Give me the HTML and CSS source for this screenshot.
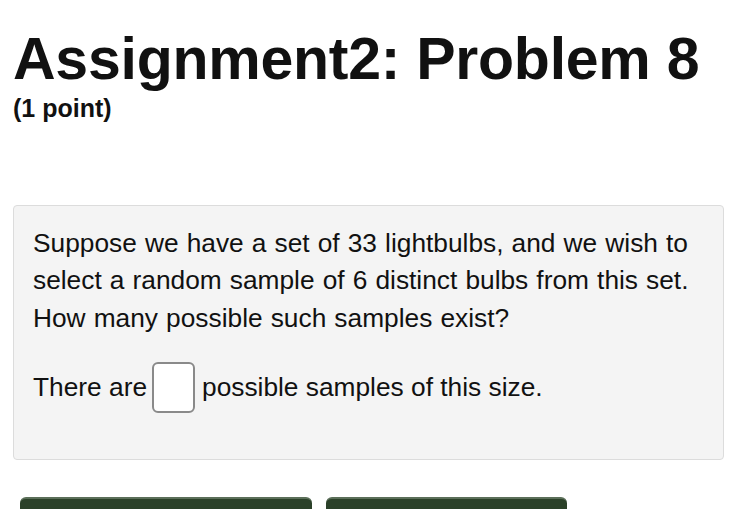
FILE: index.html
```html
<!DOCTYPE html>
<html lang="en">
<head>
<meta charset="utf-8">
<title>Assignment2: Problem 8</title>
<link rel="stylesheet" href="styles.css">
</head>
<body>
<main class="page">
  <h1 class="title">Assignment2: Problem 8</h1>
  <div class="points">(1 point)</div>
  <section class="problem">
    <p class="question">Suppose we have a set of 33 lightbulbs, and we wish to select a random sample of 6 distinct bulbs from this set. How many possible such samples exist?</p>
    <div class="answer-row">
      <span>There are</span>
      <input class="answer" type="text" aria-label="answer">
      <span>possible samples of this size.</span>
    </div>
  </section>
  <div class="actions">
    <button class="btn btn-wide" type="button"></button>
    <button class="btn btn-narrow" type="button"></button>
  </div>
</main>
</body>
</html>
```
FILE: styles.css
```css
html, body {
  margin: 0;
  padding: 0;
  background: #ffffff;
}
body {
  font-family: "Liberation Sans", Arial, Helvetica, sans-serif;
  color: #111111;
  overflow: hidden;
}
.page {
  padding: 0 14px 0 13px;
}
.title {
  margin: 26px 0 0 0;
  font-size: 59px;
  line-height: 1.15;
  font-weight: bold;
  letter-spacing: -0.25px;
}
.points {
  font-size: 25px;
  line-height: 1.15;
  font-weight: bold;
}
.problem {
  margin-top: 82px;
  background: #f4f4f4;
  border: 1px solid #dcdcdc;
  border-radius: 4px;
  padding: 19px 19px 46px 19px;
  font-size: 26.3px;
  line-height: 1.43;
}
.question {
  margin: 0 0 25px 0;
  word-spacing: 0.8px;
}
.answer-row {
  display: flex;
  align-items: center;
  gap: 5px;
}
.answer {
  box-sizing: border-box;
  width: 43px;
  height: 51px;
  margin: 0 2px 0 0;
  border: 2px solid #8a8a8a;
  border-radius: 6px;
  background: #ffffff;
  padding: 0;
  font: inherit;
}
.actions {
  display: flex;
  gap: 14px;
  margin: 37px 0 0 7px;
}
.btn {
  height: 44px;
  background: #2b4129;
  border: none;
  border-top: 2px solid #5b6f59;
  border-radius: 6px;
  padding: 0;
}
.btn-wide {
  width: 292px;
}
.btn-narrow {
  width: 241px;
}
```
